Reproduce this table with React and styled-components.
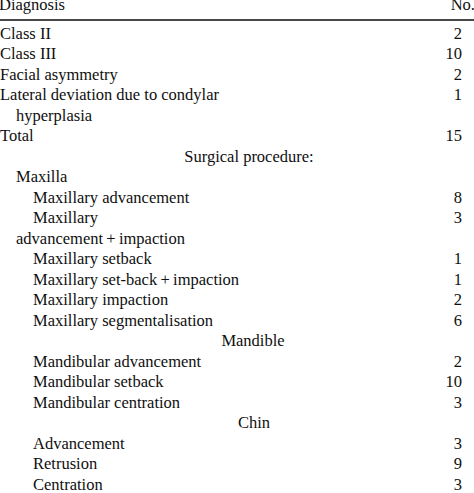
import React from 'react';
import styled, { createGlobalStyle } from 'styled-components';

const Global = createGlobalStyle`
  html, body {
    margin: 0;
    padding: 0;
    background: #fff;
  }
  body {
    overflow: hidden;
  }
`;

const Table = styled.div`
  width: 474px;
  font-family: 'Liberation Serif', 'Times New Roman', serif;
  font-size: 16.5px;
  line-height: 20.5px;
  color: #0f0f0f;
`;

const Head = styled.div`
  display: flex;
  justify-content: space-between;
  margin-top: -5px;
  margin-left: -1px;
  margin-right: -1px;
  padding-bottom: 3px;
  border-bottom: 2px solid #474747;
`;

const Body = styled.div`
  padding-top: 3px;
`;

const Row = styled.div`
  display: flex;
  justify-content: space-between;
  height: 20.5px;
  white-space: nowrap;
`;

const Label = styled.span`
  padding-left: ${(p) => p.$indent || 0}px;
`;

const Count = styled.span`
  padding-right: 12px;
`;

const Section = styled.div`
  height: 20.5px;
  text-align: center;
  padding-left: ${(p) => p.$shift || 0}px;
`;

const rows = [
  { t: 'Class II', n: '2' },
  { t: 'Class III', n: '10' },
  { t: 'Facial asymmetry', n: '2' },
  { t: 'Lateral deviation due to condylar', n: '1' },
  { t: 'hyperplasia', i: 16 },
  { t: 'Total', n: '15' },
  { section: 'Surgical procedure:', shift: 24 },
  { t: 'Maxilla', i: 16 },
  { t: 'Maxillary advancement', i: 33, n: '8' },
  { t: 'Maxillary', i: 33, n: '3' },
  { t: 'advancement\u2009+\u2009impaction', i: 16 },
  { t: 'Maxillary setback', i: 33, n: '1' },
  { t: 'Maxillary set-back\u2009+\u2009impaction', i: 33, n: '1' },
  { t: 'Maxillary impaction', i: 33, n: '2' },
  { t: 'Maxillary segmentalisation', i: 33, n: '6' },
  { section: 'Mandible', shift: 32 },
  { t: 'Mandibular advancement', i: 33, n: '2' },
  { t: 'Mandibular setback', i: 33, n: '10' },
  { t: 'Mandibular centration', i: 33, n: '3' },
  { section: 'Chin', shift: 34 },
  { t: 'Advancement', i: 33, n: '3' },
  { t: 'Retrusion', i: 33, n: '9' },
  { t: 'Centration', i: 33, n: '3' },
];

export default function App() {
  return (
    <>
      <Global />
      <Table>
        <Head>
          <span>Diagnosis</span>
          <span>No.</span>
        </Head>
        <Body>
          {rows.map((r, k) =>
            r.section ? (
              <Section key={k} $shift={r.shift}>
                {r.section}
              </Section>
            ) : (
              <Row key={k}>
                <Label $indent={r.i}>{r.t}</Label>
                <Count>{r.n}</Count>
              </Row>
            )
          )}
        </Body>
      </Table>
    </>
  );
}
